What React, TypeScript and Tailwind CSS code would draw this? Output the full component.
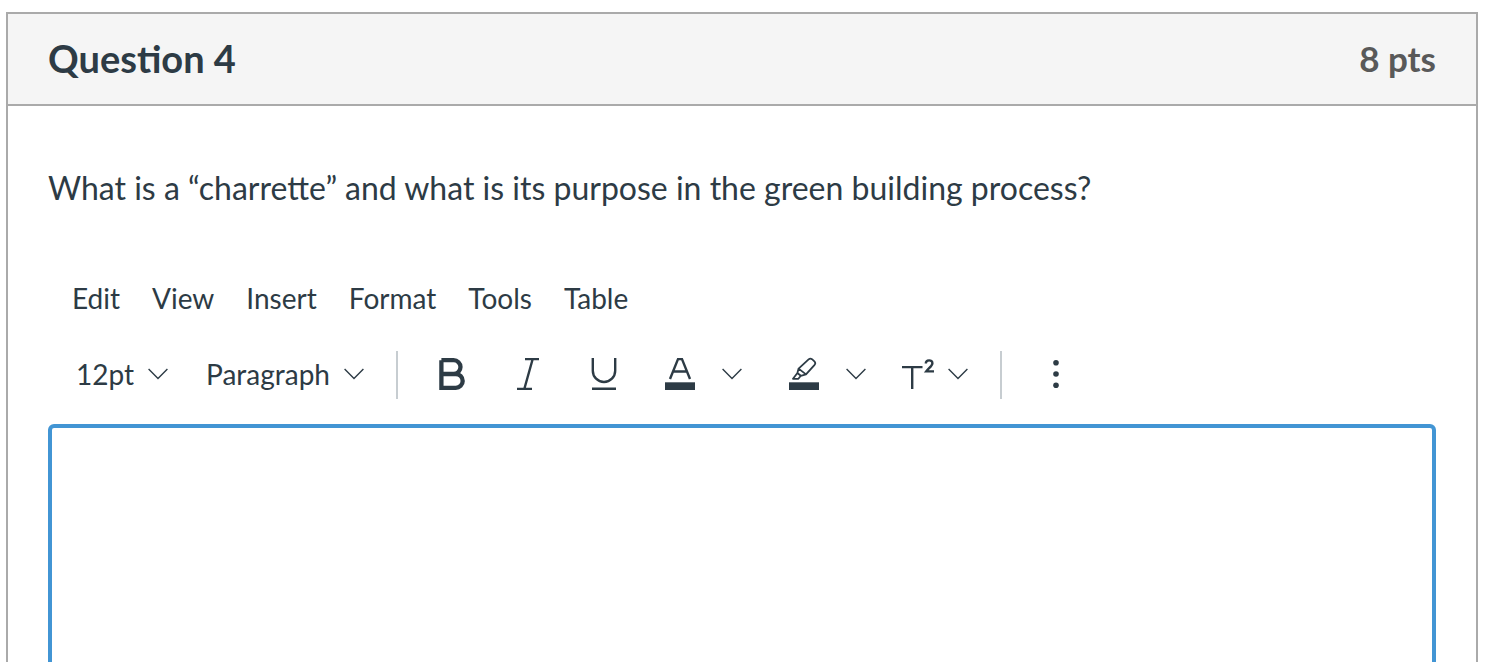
import type {ReactNode} from "react";

const menus: string[] = ["Edit", "View", "Insert", "Format", "Tools", "Table"];

const Chevron = () => (
    <svg width="20" height="14" viewBox="0 0 20 14" fill="none" stroke="currentColor" strokeWidth="1.4">
        <path d="M0.6 1L10 10.4L19.4 1"/>
    </svg>
);

const Icon = ({children}: {children: ReactNode}) => (
    <svg width="36" height="36" viewBox="0 0 36 36" fill="none" stroke="currentColor" strokeWidth="2.4">
        {children}
    </svg>
);

const ToolButton = ({label, children}: {label: string, children: ReactNode}) => (
    <button type="button" aria-label={label} className="flex h-12 w-[76px] items-center justify-center">
        {children}
    </button>
);

const ArrowButton = ({label}: {label: string}) => (
    <button type="button" aria-label={label} className="flex h-12 w-7 items-center justify-center">
        <Chevron/>
    </button>
);

const ToolSelect = ({label, options}: {label: string, options: string[]}) => (
    <div className="relative flex items-center">
        <select aria-label={label} className="field-sizing-content h-12 appearance-none bg-transparent pb-[2px] pr-[34px] outline-none">
            {options.map((option) => <option key={option}>{option}</option>)}
        </select>
        <span className="pointer-events-none absolute inset-y-0 right-0 flex items-center">
            <Chevron/>
        </span>
    </div>
);

const Separator = () => <div className="h-12 w-[2px] bg-[#c7cdd1]"/>;

const Toolbar = () => (
    <div className="flex items-center pl-7 text-[28px]">
        <ToolSelect label="Font size" options={["12pt", "14pt", "18pt", "24pt"]}/>
        <div className="ml-[38px] mr-8">
            <ToolSelect label="Block" options={["Paragraph", "Heading 2", "Heading 3"]}/>
        </div>
        <Separator/>
        <div className="mx-4 flex">
            <ToolButton label="Bold">
                <Icon>
                    <path strokeWidth="4.3" d="M7.4 3.2H19.6a6.9 6.9 0 0 1 0 13.8H7.4M19 17h2.8a6.9 6.9 0 0 1 0 13.8H7.4V3.2"/>
                </Icon>
            </ToolButton>
            <ToolButton label="Italic">
                <Icon>
                    <path d="M15 2.1H29M7 31.9H22M22.7 2L14.3 32"/>
                </Icon>
            </ToolButton>
            <ToolButton label="Underline">
                <Icon>
                    <path d="M6.8 1V13.8a11.2 11.2 0 0 0 22.4 0V1M6 31.8H30"/>
                </Icon>
            </ToolButton>
            <ToolButton label="Text color">
                <Icon>
                    <path d="M8 22L16 2.1H20L28 22M10.8 14.5H25.2"/>
                    <path fill="currentColor" stroke="none" d="M3 25.3H33V33H3z"/>
                </Icon>
            </ToolButton>
            <ArrowButton label="Text color options"/>
        </div>
        <div className="ml-1 mr-5 flex">
            <ToolButton label="Highlight color">
                <Icon>
                    <path strokeWidth="1.8" strokeLinejoin="round" d="M12.6 11.6L22.6 2.4Q24.2 1 26 2.2L28.4 4.4Q30 6 28.6 7.8L20 17.4zM12.6 11.6L11.4 16L7 21.8H12.4L14.8 18.8L20 17.4M11.4 16L14.8 18.8"/>
                    <path fill="currentColor" stroke="none" d="M3 25.3H33V33H3z"/>
                </Icon>
            </ToolButton>
            <ArrowButton label="Highlight color options"/>
        </div>
        <div className="mr-7 flex">
            <button type="button" aria-label="Superscript" className="flex h-12 w-[54px] items-center justify-center">
                <Icon>
                    <path d="M3 10.1H23.5M13.2 10V32"/>
                    <path strokeWidth="2.4" d="M26.8 6.6C26.8 2.4 33.4 2.4 33.4 6.2C33.4 9 29.5 11.2 27.2 14.4H35"/>
                </Icon>
            </button>
            <ArrowButton label="Superscript options"/>
        </div>
        <Separator/>
        <div className="ml-4">
            <ToolButton label="More">
                <Icon>
                    <g fill="currentColor" stroke="none">
                        <circle cx="18" cy="5.8" r="2.8"/>
                        <circle cx="18" cy="17" r="2.8"/>
                        <circle cx="18" cy="28.2" r="2.8"/>
                    </g>
                </Icon>
            </ToolButton>
        </div>
    </div>
);

const App = () => {
    return (
        <main className="h-screen overflow-hidden bg-white pl-[6px] pr-[34px] pt-3 font-['Lato',sans-serif] text-[#2d3b45]">
            <section className="border-2 border-[#aaaaaa]">
                <header className="flex items-center justify-between border-b-2 border-[#aaaaaa] bg-[#f5f5f5] px-10 pt-5 pb-[22px]">
                    <h1 className="text-[38px] leading-12 font-bold">Question 4</h1>
                    <span className="text-[35px] leading-12 font-bold text-[#595959]">8 pts</span>
                </header>
                <div className="px-10 pb-10 pt-[58px]">
                    <p className="text-[32px] leading-12">
                        What is a “charrette” and what is its purpose in the green building process?
                    </p>
                    <nav className="mt-[62px] mb-[29px] flex gap-8 pl-6 text-[28px] leading-12">
                        {menus.map((menu) => <button type="button" key={menu}>{menu}</button>)}
                    </nav>
                    <Toolbar/>
                    <textarea
                        aria-label="Answer"
                        className="mt-[25px] block h-96 w-full resize-none rounded-md border-4 border-[#4295d4] p-4 text-[32px] outline-none"
                    />
                </div>
            </section>
        </main>
    );
}

export default App;
